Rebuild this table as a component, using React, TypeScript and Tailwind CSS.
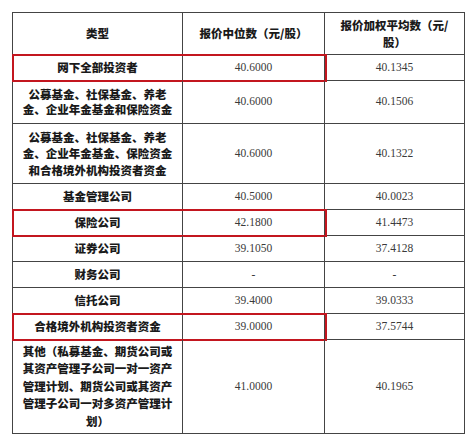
import React from "react";

interface Row {
  name: string[];
  median: string;
  avg: string;
  h: string;
  lead?: string;
  mark?: boolean;
}

const rows: Row[] = [
  { name: ["网下全部投资者"], median: "40.6000", avg: "40.1345", h: "h-[26px]", mark: true },
  { name: ["公募基金、社保基金、养老", "金、企业年金基金和保险资金"], median: "40.6000", avg: "40.1506", h: "h-[43px]", lead: "leading-[15px]" },
  {
    name: ["公募基金、社保基金、养老", "金、企业年金基金、保险资金", "和合格境外机构投资者资金"],
    median: "40.6000",
    avg: "40.1322",
    h: "h-[60px]",
    lead: "leading-[16.5px]",
  },
  { name: ["基金管理公司"], median: "40.5000", avg: "40.0023", h: "h-[26px]" },
  { name: ["保险公司"], median: "42.1800", avg: "41.4473", h: "h-[26px]", mark: true },
  { name: ["证券公司"], median: "39.1050", avg: "37.4128", h: "h-[26px]" },
  { name: ["财务公司"], median: "-", avg: "-", h: "h-[26px]" },
  { name: ["信托公司"], median: "39.4000", avg: "39.0333", h: "h-[26px]" },
  { name: ["合格境外机构投资者资金"], median: "39.0000", avg: "37.5744", h: "h-[26px]", mark: true },
  {
    name: [
      "其他（私募基金、期货公司或",
      "其资产管理子公司一对一资产",
      "管理计划、期货公司或其资产",
      "管理子公司一对多资产管理计",
      "划）",
    ],
    median: "41.0000",
    avg: "40.1965",
    h: "h-[94px]",
    lead: "leading-[17.5px]",
  },
];

const cjk = "font-['Noto_Sans_CJK_SC',sans-serif] font-black text-[11.5px] text-[#1a1a1a]";
const num = "font-['Liberation_Serif','Noto_Sans_CJK_SC',serif] text-[11.5px] text-[#3a3a3a]";
const cell = "flex flex-col items-center justify-center text-center border-r border-b border-[#444]";

export default function App() {
  return (
    <div className="w-[474px] h-[439px] bg-white pt-[12px] pl-[12px]">
      <div className="w-[453px] border-l border-t border-[#444]">
        <div className="grid grid-cols-[170px_142px_140px] h-[42px]">
          <div className={`${cell} ${cjk}`}>类型</div>
          <div className={`${cell} ${cjk}`}>报价中位数（元/股）</div>
          <div className={`${cell} ${cjk} leading-[17px]`}>
            <span>报价加权平均数（元/</span>
            <span>股）</span>
          </div>
        </div>
        {rows.map((r, i) => (
          <div key={i} className={`relative grid grid-cols-[170px_142px_140px] ${r.h}`}>
            <div className={`${cell} ${cjk} ${r.lead ?? ""}`}>
              {r.name.map((t, j) => (
                <span key={j}>{t}</span>
              ))}
            </div>
            <div className={`${cell} ${num}`}>{r.median}</div>
            <div className={`${cell} ${num}`}>{r.avg}</div>
            {r.mark && (
              <div className="absolute left-[-1px] top-[-1px] w-[315px] h-[28px] border-2 border-[#c3161f] pointer-events-none" />
            )}
          </div>
        ))}
      </div>
    </div>
  );
}
